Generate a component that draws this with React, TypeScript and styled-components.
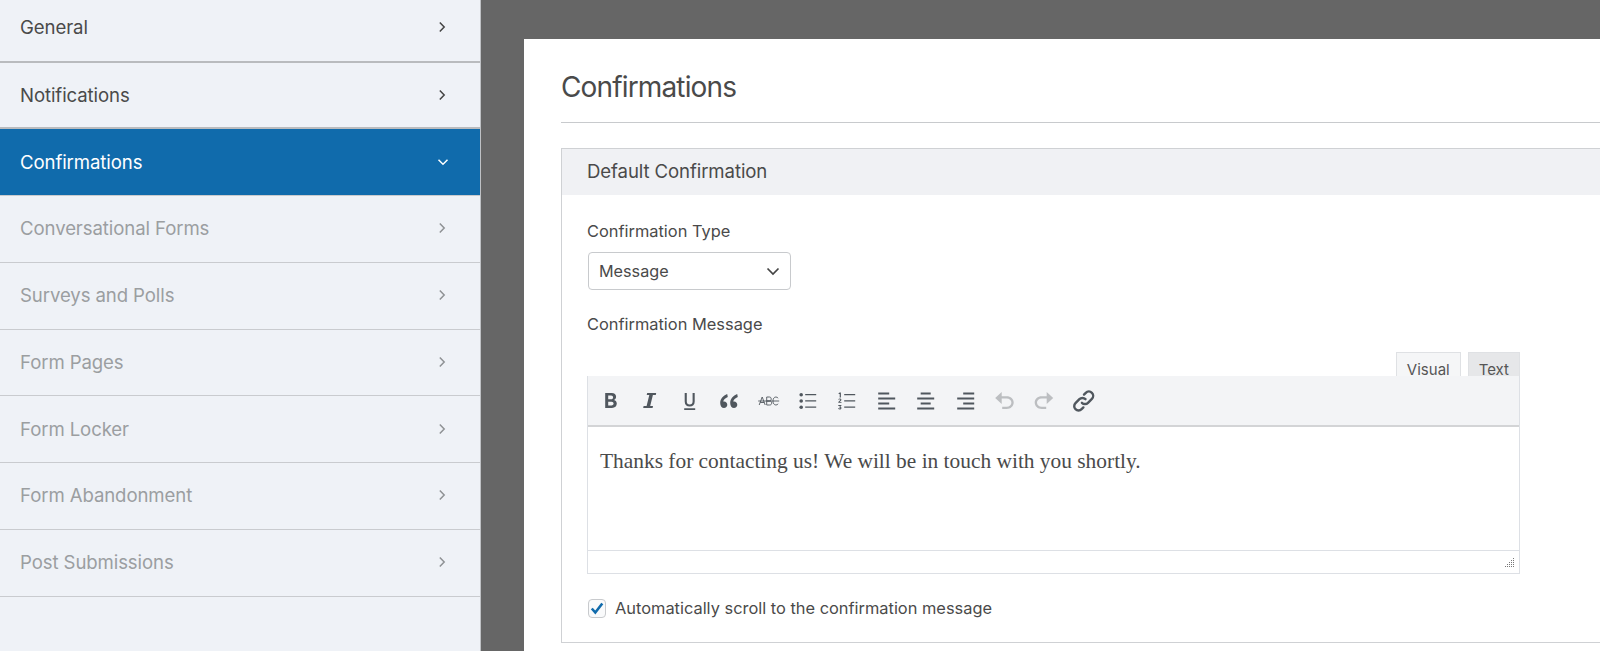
import React from "react";
import styled, { createGlobalStyle } from "styled-components";

const Global = createGlobalStyle`
  html, body { margin: 0; padding: 0; height: 651px; overflow: hidden; background: #666; }
  #root { height: 651px; }
  * { box-sizing: border-box; }
`;

const Page = styled.div`
  display: flex;
  width: 1600px;
  height: 651px;
  overflow: hidden;
  font-family: Inter, "Liberation Sans", sans-serif;
  color: #4a4a4a;
`;

const Sidebar = styled.nav`
  width: 481px;
  flex: none;
  background: #eff2f7;
  border-right: 1px solid #bfc1c4;
`;

const Row = styled.div<{ $active?: boolean; $muted?: boolean; $first?: boolean; $strong?: boolean }>`
  display: flex;
  align-items: center;
  justify-content: space-between;
  height: ${(p) => (p.$first ? "62.5px" : "66.75px")};
  padding: ${(p) => (p.$first ? "0 31px 6px 20px" : p.$active ? "0 30px 1px 20px" : p.$strong ? "0 31px 0 20px" : "0 31px 1px 20px")};
  font-size: 18.6px;
  letter-spacing: -0.1px;
  background: ${(p) => (p.$active ? "#106bac" : "transparent")};
  color: ${(p) => (p.$active ? "#fff" : p.$muted ? "#9b9ea1" : "#4a4a4a")};
  border-bottom: ${(p) => (p.$active ? "1px solid #c9cbce" : p.$strong ? "2px solid #b9bbbe" : "1px solid #c9cbcf")};
`;

const Main = styled.main`
  flex: 1;
  min-width: 0;
  padding: 39px 0 0 43px;
  background: #666;
`;

const Panel = styled.section`
  height: 100%;
  background: #fff;
  padding: 0 0 0 37px;
  overflow: hidden;
`;

const Title = styled.h1`
  margin: 0;
  height: 84px;
  display: flex;
  align-items: center;
  padding-top: 13px;
  font-size: 28px;
  font-weight: 400;
  letter-spacing: -0.85px;
  color: #4a4a4a;
  border-bottom: 1px solid #c8cacd;
`;

const Box = styled.div`
  margin: 25px -20px 0 0;
  height: 495px;
  border: 1px solid #cfd1d4;
`;

const BoxHeader = styled.div`
  height: 46px;
  display: flex;
  align-items: center;
  padding: 0 0 2px 25px;
  background: #f0f1f4;
  font-size: 18.6px;
  letter-spacing: -0.1px;
  color: #4a4a4a;
`;

const BoxBody = styled.div`
  padding: 25px 0 0 25px;
  width: 958px;
`;

const Label = styled.div`
  font-size: 16.4px;
  line-height: 22px;
  color: #4a4a4a;
`;

const SelectBox = styled.div`
  display: flex;
  align-items: center;
  justify-content: space-between;
  width: 203px;
  height: 38px;
  margin: 10px 0 23px 1px;
  padding: 0 9px 1px 10px;
  border: 1px solid #c8cacd;
  border-radius: 4px;
  font-size: 16.2px;
  color: #4a4a4a;
`;

const Tabs = styled.div`
  display: flex;
  justify-content: flex-end;
  gap: 7px;
  margin-top: 17px;
  height: 24px;
`;

const Tab = styled.div<{ $on?: boolean }>`
  height: 24px;
  padding: 9px 10px 0;
  font-size: 15px;
  line-height: 15px;
  color: #555;
  background: ${(p) => (p.$on ? "#f5f6f7" : "#e6e7e9")};
  border: 1px solid #dfe1e4;
  border-bottom: 0;
`;

const Editor = styled.div`
  border: 1px solid #dde0e5;
  border-top: 0;
  height: 198px;
  display: flex;
  flex-direction: column;
`;

const Toolbar = styled.div`
  display: flex;
  align-items: center;
  height: 51px;
  padding-left: 3px;
  background: #f3f4f6;
  border-bottom: 2px solid #d3d4d6;
  flex: none;
`;

const ToolIcon = styled.svg<{ $dim?: boolean }>`
  width: 39.4px;
  height: 24px;
  flex: none;
  fill: ${(p) => (p.$dim ? "#bcbec1" : "#50575e")};
  stroke: none;
`;

const Content = styled.div`
  flex: 1;
  padding: 21px 0 0 12px;
  font-family: "Liberation Serif", "Times New Roman", serif;
  font-size: 21.4px;
  line-height: 26px;
  color: #4a4a4a;
`;

const StatusBar = styled.div`
  flex: none;
  height: 23px;
  border-top: 1px solid #dde0e5;
  display: flex;
  justify-content: flex-end;
  align-items: flex-end;
  padding: 0 4px 4px 0;
`;

const Grip = styled.svg`
  width: 12px;
  height: 12px;
  fill: #777;
`;

const CheckRow = styled.div`
  display: flex;
  align-items: center;
  gap: 9px;
  margin: 24px 0 0 1px;
  font-size: 16.4px;
  color: #4a4a4a;
`;

const CheckBox = styled.span`
  display: flex;
  align-items: center;
  justify-content: center;
  width: 18px;
  height: 19px;
  border: 1px solid #c8cacd;
  border-radius: 4px;
  background: #f9fafb;
`;

const Chevron = ({ color, down }: { color: string; down?: boolean }) => (
  <svg width="14" height="14" viewBox="0 0 14 14" fill="none" stroke={color} strokeWidth={1.5}>
    {down ? <path d="M2.5 4.8 7 9.2l4.5-4.4" /> : <path d="M4.8 2.5 9.2 7l-4.4 4.5" />}
  </svg>
);

const items = [
  { t: "General", first: true, strong: true },
  { t: "Notifications", strong: true },
  { t: "Confirmations", active: true },
  { t: "Conversational Forms", muted: true },
  { t: "Surveys and Polls", muted: true },
  { t: "Form Pages", muted: true },
  { t: "Form Locker", muted: true },
  { t: "Form Abandonment", muted: true },
  { t: "Post Submissions", muted: true },
];

const V = "0 0 24 24";

export default function App() {
  return (
    <Page>
      <Global />
      <Sidebar>
        {items.map((i) => (
          <Row key={i.t} $active={i.active} $muted={i.muted} $first={i.first} $strong={i.strong}>
            {i.t}
            <Chevron color={i.active ? "#fff" : i.muted ? "#8f9295" : "#444"} down={i.active} />
          </Row>
        ))}
      </Sidebar>
      <Main>
        <Panel>
          <Title>Confirmations</Title>
          <Box>
            <BoxHeader>Default Confirmation</BoxHeader>
            <BoxBody>
              <Label>Confirmation Type</Label>
              <SelectBox>
                Message
                <svg width="16" height="16" viewBox="0 0 16 16" fill="none" stroke="#444" strokeWidth="1.7">
                  <path d="M2.5 5.5 8 11l5.5-5.5" />
                </svg>
              </SelectBox>
              <Label>Confirmation Message</Label>
              <Tabs>
                <Tab $on>Visual</Tab>
                <Tab>Text</Tab>
              </Tabs>
              <Editor>
                <Toolbar>
                  <ToolIcon viewBox={V}><path fillRule="evenodd" d="M6.500 4h6.500c2.800 0 4.400 1.500 4.400 3.700 0 1.500-.8 2.700-2.100 3.200 1.800.5 2.800 1.900 2.800 3.700 0 2.600-1.800 4.400-4.800 4.400H6.500V4Zm3 2.500v3.800h2.900c1.200 0 2-.8 2-1.900s-.8-1.900-2-1.900H9.500Zm0 6.200v3.800h3.300c1.300 0 2.100-.8 2.100-1.900s-.8-1.900-2.100-1.900H9.500Z" /></ToolIcon>
                  <ToolIcon viewBox={V}><path d="M9.500 4h9l-.4 2h-2.900l-2.700 11h2.800l-.4 2H5.500l.4-2h3l2.700-11H9l.5-2Z" /></ToolIcon>
                  <ToolIcon viewBox={V}><path d="M7 4h2.100v8.500c0 2 1 3 2.900 3s2.900-1 2.900-3V4H17v8.500c0 3.200-1.900 5-5 5s-5-1.800-5-5V4ZM6.500 19.300h11v1.700h-11z" /></ToolIcon>
                  <ToolIcon viewBox={V}><path d="M10.500 5c-4 1.600-7 4.700-7 9 0 3 1.600 5 3.800 5 1.900 0 3.300-1.400 3.300-3.300s-1.400-3.200-3.200-3.200c-.3 0-.6 0-.9.100.4-1.900 2-3.500 4.600-4.700L10.500 5Zm10 0c-4 1.600-7 4.700-7 9 0 3 1.600 5 3.800 5 1.900 0 3.300-1.400 3.300-3.300s-1.400-3.200-3.200-3.200c-.3 0-.6 0-.9.100.4-1.900 2-3.500 4.600-4.700L20.500 5Z" /></ToolIcon>
                  <ToolIcon viewBox={V}>
                    <g fill="none" stroke="#50575e" strokeWidth="0.900">
                      <path d="M2.500 16 5.500 8l3 8M3.500 13.500h4" />
                      <path d="M10 8v8h3c1.300 0 2-.8 2-2s-.8-2-2-2h-3m0 0h2.700c1.100 0 1.800-.7 1.800-2s-.7-2-1.800-2H10" />
                      <path d="M21.500 9.300c-.6-.9-1.400-1.300-2.300-1.300-1.800 0-2.900 1.700-2.900 4s1.100 4 2.900 4c.9 0 1.700-.4 2.300-1.300" />
                      <path d="M1.500 12h21" />
                    </g>
                  </ToolIcon>
                  <ToolIcon viewBox={V}><circle cx="5.500" cy="5.800" r="1.800" /><circle cx="5.500" cy="12" r="1.800" /><circle cx="5.500" cy="18.200" r="1.800" /><path d="M9.500 5h11v1.300h-11zM9.500 11.300h11v1.300h-11zM9.500 17.500h11v1.300h-11z" /></ToolIcon>
                  <ToolIcon viewBox={V}><path d="M9.500 5h11v1.300h-11zM9.500 11.300h11v1.300h-11zM9.500 17.500h11v1.300h-11zM5 3.500h1.200v5H5V5H3.900v-.7L5 3.500ZM3.500 10.200c.4-.5 1-.8 1.600-.8 1 0 1.600.6 1.600 1.300 0 .6-.4 1-1 1.600l-.7.6h1.800v.9H3.600v-.8l1.500-1.500c.4-.4.5-.6.5-.8 0-.3-.2-.5-.5-.5-.3 0-.6.2-.9.5l-.7-.5ZM3.600 16h3.100v.7l-1.100 1c.7.1 1.200.6 1.200 1.300 0 .9-.7 1.500-1.700 1.500-.7 0-1.300-.2-1.700-.7l.6-.7c.3.3.7.5 1.100.5s.6-.2.6-.5-.3-.5-.8-.5h-.4v-.7l1-1h-1.900V16Z" /></ToolIcon>
                  <ToolIcon viewBox={V}><path d="M3.500 3.500h11v2h-11zM3.500 8.500h17v2h-17zM3.500 13.500h11v2h-11zM3.500 18.500h17v2h-17z" /></ToolIcon>
                  <ToolIcon viewBox={V}><path d="M7 3.500h10v2H7zM3.500 8.500h17v2h-17zM7 13.500h10v2H7zM3.500 18.500h17v2h-17z" /></ToolIcon>
                  <ToolIcon viewBox={V}><path d="M9.500 3.500h11v2h-11zM3.500 8.500h17v2h-17zM9.500 13.500h11v2h-11zM3.500 18.500h17v2h-17z" /></ToolIcon>
                  <ToolIcon viewBox={V} $dim><path d="M2.500 9 9 3v4.200h5c4 0 7 2.700 7 6.300s-3 6.500-7 6.500H9.500v-2.200H14c2.700 0 4.700-1.900 4.700-4.300s-2-4.100-4.700-4.100H9V15L2.500 9Z" /></ToolIcon>
                  <ToolIcon viewBox={V} $dim><path d="M21.500 9 15 3v4.200h-5c-4 0-7 2.700-7 6.300s3 6.500 7 6.500h4.500v-2.200H10c-2.700 0-4.700-1.900-4.700-4.300s2-4.100 4.700-4.100h5V15l6.500-6Z" /></ToolIcon>
                  <ToolIcon viewBox={V}>
                    <g fill="none" stroke="#50575e" strokeWidth="2.400" strokeLinecap="round">
                      <path d="M10.200 13.800a4.300 4.300 0 0 0 6.100 0l3.900-3.900a4.300 4.300 0 0 0-6.100-6.100l-1.800 1.800" />
                      <path d="M13.800 10.200a4.300 4.300 0 0 0-6.100 0l-3.900 3.900a4.300 4.300 0 0 0 6.100 6.100l1.800-1.800" />
                    </g>
                  </ToolIcon>
                </Toolbar>
                <Content>Thanks for contacting us! We will be in touch with you shortly.</Content>
                <StatusBar>
                  <Grip viewBox="0 0 12 12">
                    {[[10, 1], [8, 3], [10, 3], [6, 5], [8, 5], [10, 5], [4, 7], [6, 7], [8, 7], [10, 7], [2, 9], [4, 9], [6, 9], [8, 9], [10, 9]].map(([x, y]) => (
                      <rect key={`${x}-${y}`} x={x} y={y} width="1" height="1" />
                    ))}
                  </Grip>
                </StatusBar>
              </Editor>
              <CheckRow>
                <CheckBox>
                  <svg width="14" height="14" viewBox="0 0 14 14" fill="none" stroke="#106bac" strokeWidth="2.600">
                    <path d="M1.800 7.500 5.300 11.500 12.300 2.500" />
                  </svg>
                </CheckBox>
                Automatically scroll to the confirmation message
              </CheckRow>
            </BoxBody>
          </Box>
        </Panel>
      </Main>
    </Page>
  );
}
